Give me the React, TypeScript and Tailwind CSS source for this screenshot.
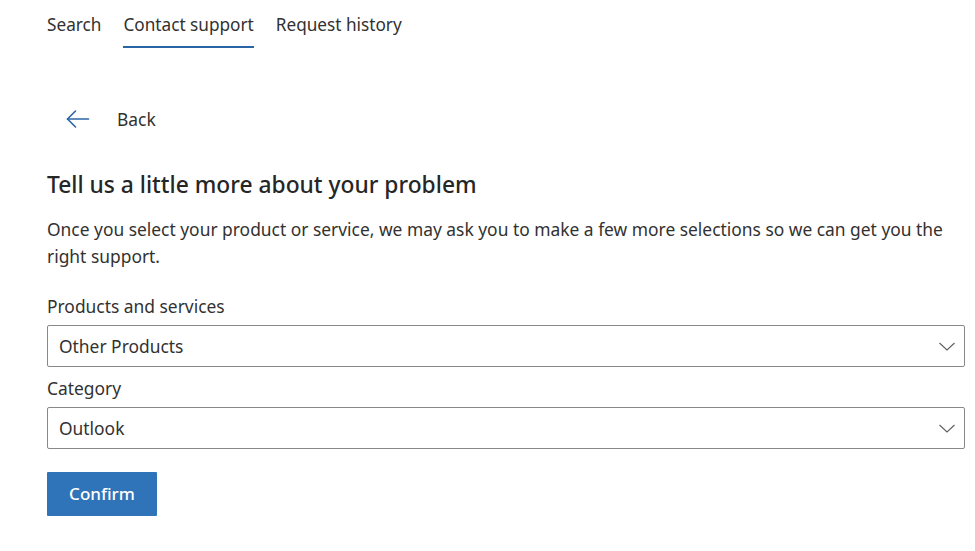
const tabs = [
    { title: 'Search', active: false },
    { title: 'Contact support', active: true },
    { title: 'Request history', active: false },
];

const fields = [
    { label: 'Products and services', value: 'Other Products' },
    { label: 'Category', value: 'Outlook' },
];

function BackArrow() {
    return (
        <svg width="24" height="20" viewBox="0 0 24 20" fill="none" stroke="#2b64a5" strokeWidth="1.6" strokeLinecap="round" strokeLinejoin="round">
            <path d="M22.5 10H1.5" />
            <path d="M9.5 2L1.5 10L9.5 18" />
        </svg>
    );
}

function Chevron() {
    return (
        <svg width="16" height="9" viewBox="0 0 16 9" fill="none" stroke="#605e5c" strokeWidth="1.1">
            <path d="M0.5 1L8 8L15.5 1" />
        </svg>
    );
}

export default function App() {
    return (
        <div
            className="min-h-screen bg-white pl-[47px] pr-[10px] text-[#323130]"
            style={{ fontFamily: '"Noto Sans", "Open Sans", sans-serif' }}
        >
            {/* Tabs */}
            <nav className="flex gap-[22px] pt-[12px]">
                {tabs.map((t) => (
                    <div key={t.title} className="flex flex-col">
                        <span className="text-[17.2px] leading-[26px] text-[#323130]">{t.title}</span>
                        <span
                            className={`mt-[8px] h-[2px] ${t.active ? 'bg-[#2b64a5]' : 'bg-transparent'}`}
                        />
                    </div>
                ))}
            </nav>

            {/* Back */}
            <button className="mt-[59px] ml-[19px] flex items-center gap-[27px] text-[17.4px] leading-[24px] text-[#323130]">
                <BackArrow />
                <span>Back</span>
            </button>

            <h1 className="mt-[40px] text-[22.8px] font-medium leading-[28px] text-[#262626]">
                Tell us a little more about your problem
            </h1>
            <p className="mt-[17px] text-[17.4px] leading-[27px]">
                Once you select your product or service, we may ask you to make a few more selections so we can get you the
                right support.
            </p>

            <div className="mt-[23px] flex flex-col gap-[8px]">
                {fields.map((f) => (
                    <div key={f.label} className="flex flex-col gap-[6px]">
                        <label className="text-[17.4px] leading-[26px]">{f.label}</label>
                        <div className="flex h-[42px] items-center justify-between rounded-[2px] border border-[#8a8886] pl-[11px] pr-[9px]">
                            <span className="text-[17.4px]">{f.value}</span>
                            <Chevron />
                        </div>
                    </div>
                ))}
            </div>

            <button className="mt-[23px] h-[44px] w-[110px] rounded-[1px] bg-[#2f73b8] text-[17px] font-medium text-white">
                Confirm
            </button>
        </div>
    );
}
